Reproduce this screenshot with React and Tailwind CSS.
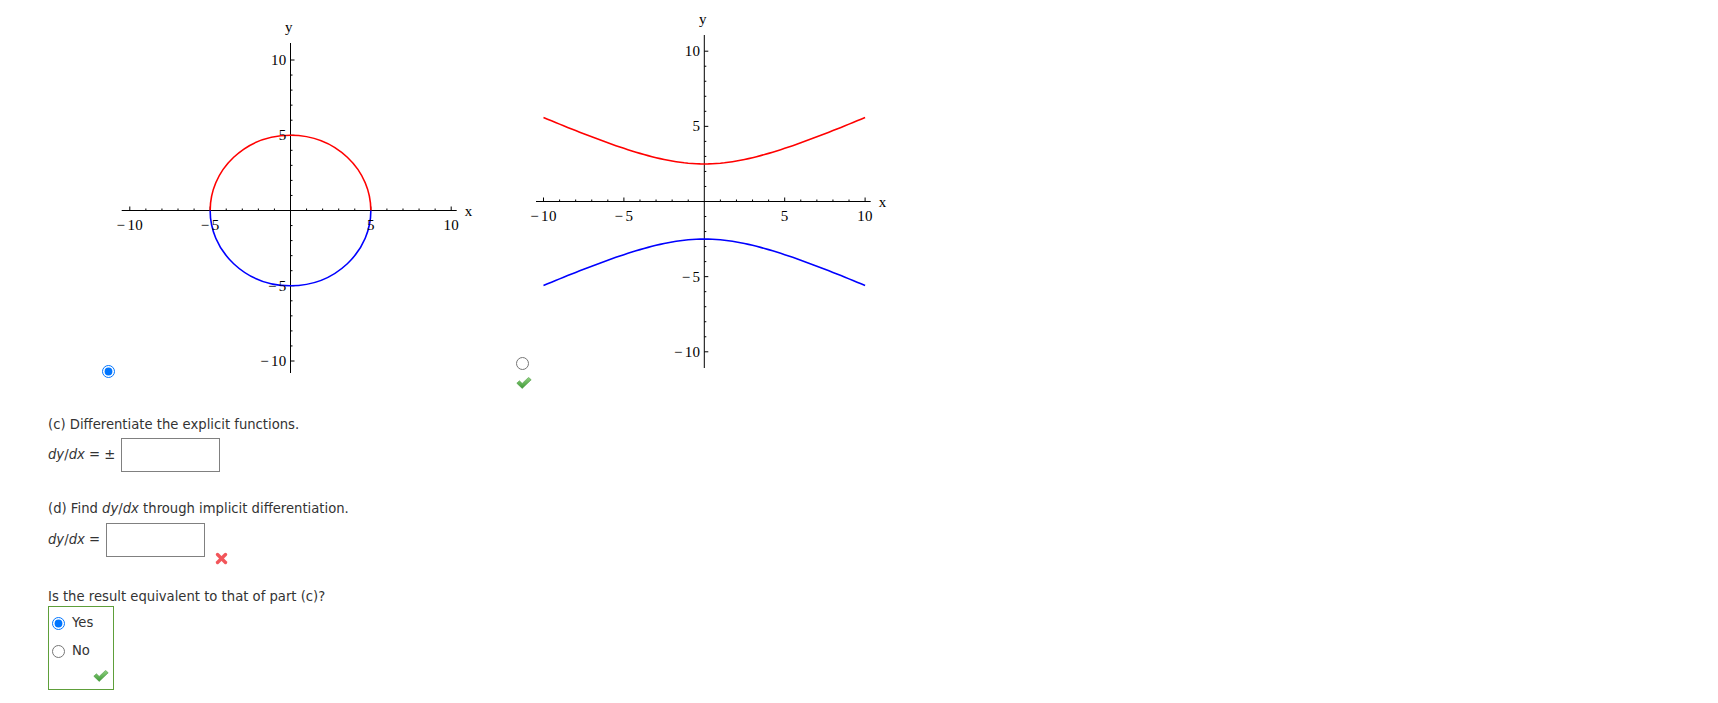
import React from "react";

const serif = "'Liberation Serif', 'Times New Roman', serif";

// one plot, drawn in page coordinates and shifted by (left, 0)
const Plot = ({ left, width, height, ox, oy, sx, sy, xFrom, xTo, yFrom, yTo, children }) => {
  const ticks = [];
  for (let i = -10; i <= 10; i++) if (i !== 0) ticks.push(i);
  const fmt = (v) =>
    v < 0 ? (
      <>
        <tspan>−</tspan>
        <tspan dx="2">{Math.abs(v)}</tspan>
      </>
    ) : (
      v
    );

  return (
    <svg width={width} height={height} className="block shrink-0">
      <g transform={`translate(${-left},0)`} fontFamily={serif} fontSize="15" letterSpacing="0.3" fill="#000">
        <line x1={xFrom} y1={oy} x2={xTo} y2={oy} stroke="#000" strokeWidth="1" />
        <line x1={ox} y1={yFrom} x2={ox} y2={yTo} stroke="#000" strokeWidth="1" />
        {ticks.map((i) => (
          <line
            key={"x" + i}
            x1={ox + i * sx}
            x2={ox + i * sx}
            y1={oy}
            y2={oy - (i % 5 === 0 ? 4 : 2)}
            stroke="#000"
            strokeWidth="1"
          />
        ))}
        {ticks.map((i) => (
          <line
            key={"y" + i}
            y1={oy - i * sy}
            y2={oy - i * sy}
            x1={ox}
            x2={ox + (i % 5 === 0 ? 4 : 2)}
            stroke="#000"
            strokeWidth="1"
          />
        ))}
        {children}
        {[-10, -5, 5, 10].map((v) => (
          <text key={"lx" + v} x={ox + v * sx} y={oy + 19.5} textAnchor="middle">
            {fmt(v)}
          </text>
        ))}
        {[10, 5, -5, -10].map((v) => (
          <text key={"ly" + v} x={ox - 4} y={oy - v * sy + 5} textAnchor="end">
            {fmt(v)}
          </text>
        ))}
        <text x={ox - 1.5} y={yFrom - 11} textAnchor="middle">
          y
        </text>
        <text x={xTo + 8} y={oy + 5.5}>
          x
        </text>
      </g>
    </svg>
  );
};

const Radio = ({ name, checked }) => (
  <input
    type="radio"
    name={name}
    defaultChecked={checked}
    className="m-0 block h-[13px] w-[13px] shrink-0"
  />
);

const Check = ({ className }) => (
  <svg width="16" height="12" viewBox="0 0 16 12" className={className}>
    <defs>
      <linearGradient id="ck" x1="0" y1="0" x2="0" y2="1">
        <stop offset="0" stopColor="#8fd17f" />
        <stop offset="1" stopColor="#3f9a37" />
      </linearGradient>
    </defs>
    <polygon points="0.8,6.2 3.4,3.8 6.2,6.4 12.6,0.4 15.2,2.8 6.2,11.4" fill="url(#ck)" stroke="#4a9a40" strokeWidth="0.6" />
  </svg>
);

const Cross = ({ className }) => (
  <svg width="13" height="13" viewBox="0 0 13 13" className={className}>
    <g stroke="#f2555a" strokeWidth="3.4" strokeLinecap="round">
      <line x1="2.5" y1="2.5" x2="10.5" y2="10.5" />
      <line x1="10.5" y1="2.5" x2="2.5" y2="10.5" />
    </g>
  </svg>
);

export default function App() {
  const hyper = (sign) => {
    const pts = [];
    for (let i = 0; i <= 80; i++) {
      const x = -10 + i * 0.25;
      const y = (sign * Math.sqrt(25 + x * x)) / 2;
      pts.push(`${(704.3 + x * 16.08).toFixed(2)},${(201.5 - y * 15.03).toFixed(2)}`);
    }
    return pts.join(" ");
  };

  return (
    <div className="min-h-screen bg-white font-['DejaVu_Sans',Verdana,sans-serif] text-[13.2px] leading-4 text-[#333]">
      <div className="flex h-[400px] items-start pl-[102px]">
        <div className="flex items-start">
          <div className="mt-[365px] w-[13px]">
            <Radio name="graph-a" checked />
          </div>
          <Plot
            left={115}
            width={365}
            height={380}
            ox={290.5}
            oy={210.5}
            sx={16.07}
            sy={15.05}
            xFrom={121.7}
            xTo={456.7}
            yFrom={43}
            yTo={373}
          >
            <path d="M 210.15 210.5 A 80.35 75.25 0 0 1 370.85 210.5" fill="none" stroke="#ff0000" strokeWidth="1.6" />
            <path d="M 210.15 210.5 A 80.35 75.25 0 0 0 370.85 210.5" fill="none" stroke="#0000ff" strokeWidth="1.6" />
          </Plot>
        </div>
        <div className="ml-[36px] flex items-start">
          <div className="mt-[357px] flex w-[13px] flex-col items-start">
            <Radio name="graph-b" />
            <Check className="mt-[7px] shrink-0" />
          </div>
          <Plot
            left={529}
            width={365}
            height={375}
            ox={704.3}
            oy={201.5}
            sx={16.08}
            sy={15.03}
            xFrom={536}
            xTo={870.7}
            yFrom={35}
            yTo={368}
          >
            <polyline points={hyper(1)} fill="none" stroke="#ff0000" strokeWidth="1.6" />
            <polyline points={hyper(-1)} fill="none" stroke="#0000ff" strokeWidth="1.6" />
          </Plot>
        </div>
      </div>

      <div className="pl-[48px] pt-[17px]">
        <p>(c) Differentiate the explicit functions.</p>
        <div className="mt-[5px] flex items-center">
          <span>
            <i>dy</i>/<i>dx</i> = ±
          </span>
          <div className="ml-[6px] h-[34px] w-[99px] border border-[#808080] bg-white" />
        </div>

        <p className="mt-[29px]">
          (d) Find <i>dy</i>/<i>dx</i> through implicit differentiation.
        </p>
        <div className="mt-[6px] flex items-start">
          <span className="leading-[34px]">
            <i>dy</i>/<i>dx</i> =
          </span>
          <div className="ml-[6px] h-[34px] w-[99px] border border-[#808080] bg-white" />
          <Cross className="ml-[10px] mt-[29px]" />
        </div>

        <p className="mt-[24px]">Is the result equivalent to that of part (c)?</p>
        <div className="mt-[1px] flex h-[84px] w-[66px] flex-col border border-[#5e9f3a] pl-[3px] pt-[8px]">
          <label className="flex items-center gap-[7px]">
            <Radio name="equiv" checked />
            <span>Yes</span>
          </label>
          <label className="mt-[12px] flex items-center gap-[7px]">
            <Radio name="equiv" />
            <span>No</span>
          </label>
          <Check className="mr-[4px] mt-[11px] self-end" />
        </div>
      </div>
    </div>
  );
}
